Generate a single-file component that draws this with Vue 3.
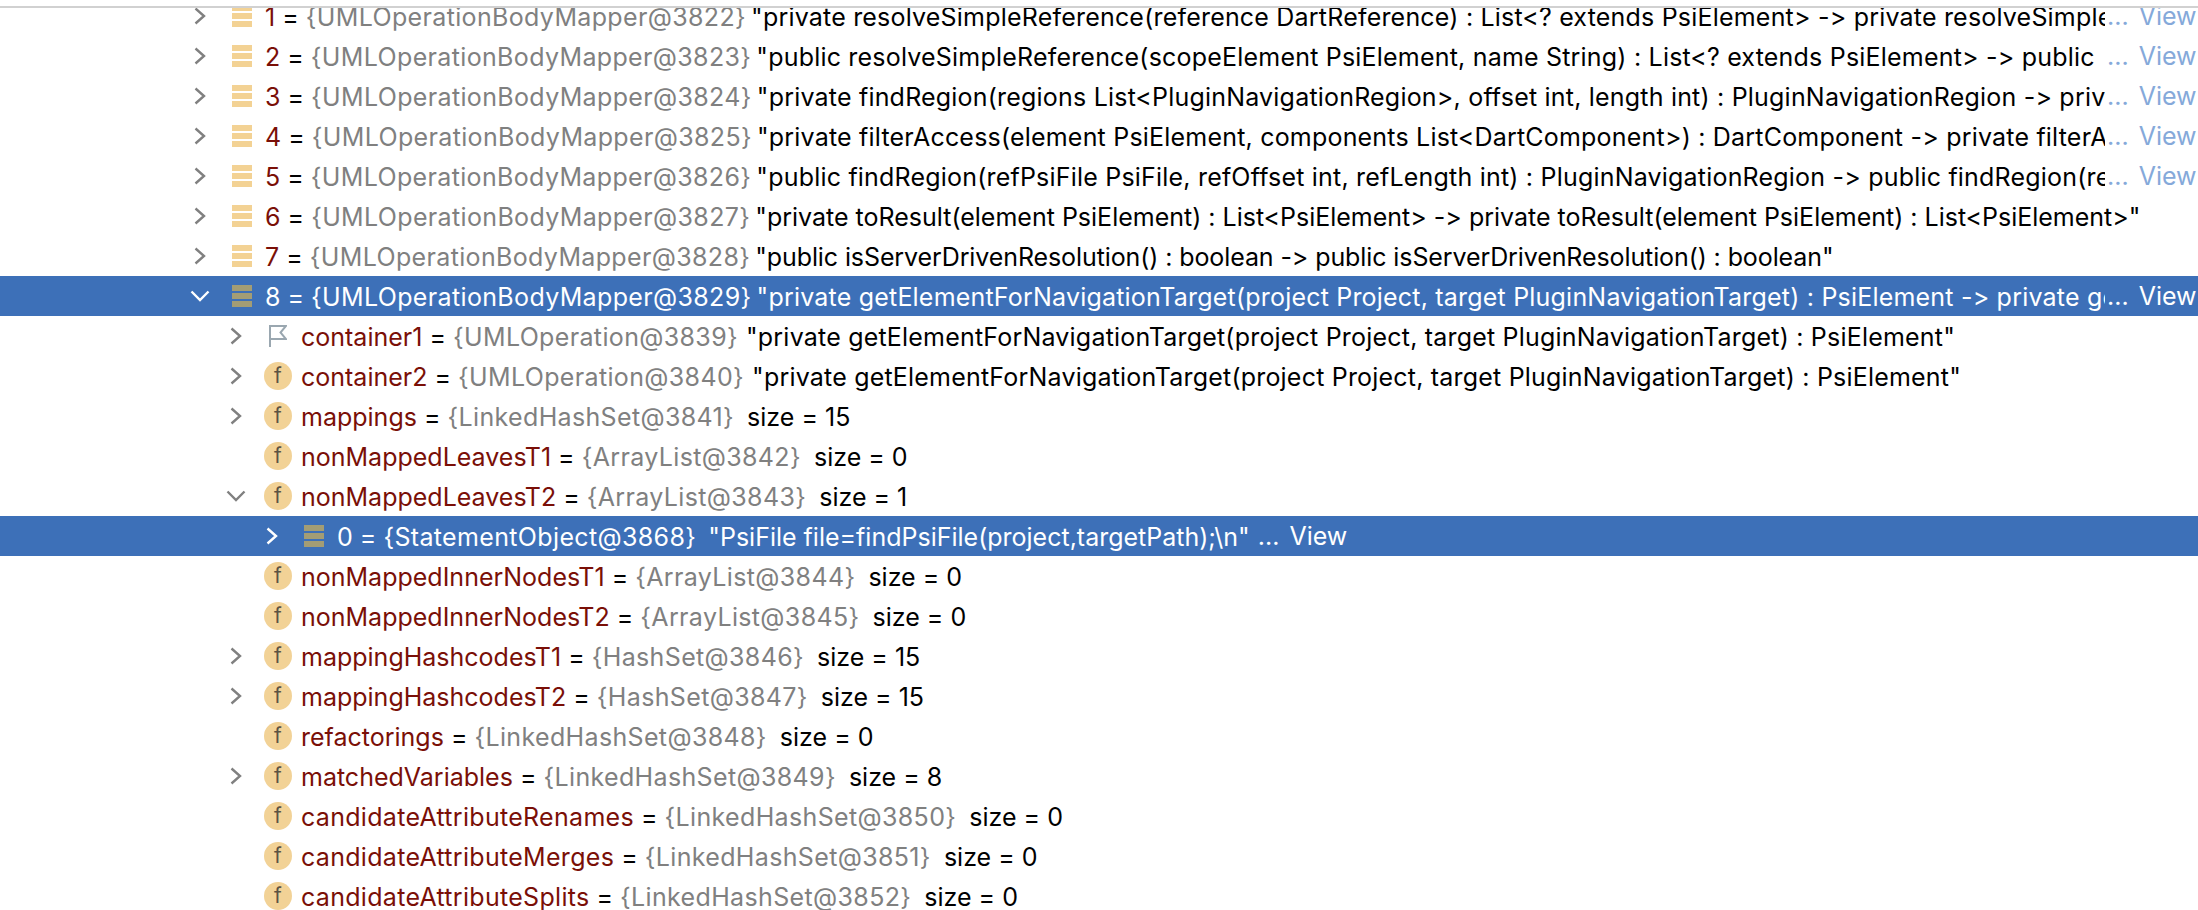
<script setup>
const rows = [
  { d: 0, c: 'r', i: 's', n: '1', t: '{UMLOperationBodyMapper@3822}', v: '"private resolveSimpleReference(reference DartReference) : List<? extends PsiElement> -> private resolveSimpleReference(reference DartReference)', view: true, fit: 'wide' },
  { d: 0, c: 'r', i: 's', n: '2', t: '{UMLOperationBodyMapper@3823}', v: '"public resolveSimpleReference(scopeElement PsiElement, name String) : List<? extends PsiElement> -> public ', view: true, fit: 'wide' },
  { d: 0, c: 'r', i: 's', n: '3', t: '{UMLOperationBodyMapper@3824}', v: '"private findRegion(regions List<PluginNavigationRegion>, offset int, length int) : PluginNavigationRegion -> private findRegion(regions List)', view: true, fit: 'wide' },
  { d: 0, c: 'r', i: 's', n: '4', t: '{UMLOperationBodyMapper@3825}', v: '"private filterAccess(element PsiElement, components List<DartComponent>) : DartComponent -> private filterAccess(element PsiElement)', view: true, fit: 'wide' },
  { d: 0, c: 'r', i: 's', n: '5', t: '{UMLOperationBodyMapper@3826}', v: '"public findRegion(refPsiFile PsiFile, refOffset int, refLength int) : PluginNavigationRegion -> public findRegion(refPsiFile PsiFile)', view: true, fit: 'wide' },
  { d: 0, c: 'r', i: 's', n: '6', t: '{UMLOperationBodyMapper@3827}', v: '"private toResult(element PsiElement) : List<PsiElement> -> private toResult(element PsiElement) : List<PsiElement>"' },
  { d: 0, c: 'r', i: 's', n: '7', t: '{UMLOperationBodyMapper@3828}', v: '"public isServerDrivenResolution() : boolean -> public isServerDrivenResolution() : boolean"', fit: 'tight' },
  { d: 0, c: 'd', i: 's', n: '8', t: '{UMLOperationBodyMapper@3829}', v: '"private getElementForNavigationTarget(project Project, target PluginNavigationTarget) : PsiElement -> private getElementForNavigationTarget(project)', view: true, sel: true, fit: 'wide' },
  { d: 1, c: 'r', i: 'p', n: 'container1', t: '{UMLOperation@3839}', v: '"private getElementForNavigationTarget(project Project, target PluginNavigationTarget) : PsiElement"', fit: 'wide' },
  { d: 1, c: 'r', i: 'f', n: 'container2', t: '{UMLOperation@3840}', v: '"private getElementForNavigationTarget(project Project, target PluginNavigationTarget) : PsiElement"', fit: 'wide' },
  { d: 1, c: 'r', i: 'f', n: 'mappings', t: '{LinkedHashSet@3841}', v: 'size = 15', sz: true },
  { d: 1, c: '', i: 'f', n: 'nonMappedLeavesT1', t: '{ArrayList@3842}', v: 'size = 0', sz: true },
  { d: 1, c: 'd', i: 'f', n: 'nonMappedLeavesT2', t: '{ArrayList@3843}', v: 'size = 1', sz: true },
  { d: 2, c: 'r', i: 's', n: '0', t: '{StatementObject@3868}', v: '"PsiFile file=findPsiFile(project,targetPath);\\n"', view: true, short: true, sel: true },
  { d: 1, c: '', i: 'f', n: 'nonMappedInnerNodesT1', t: '{ArrayList@3844}', v: 'size = 0', sz: true },
  { d: 1, c: '', i: 'f', n: 'nonMappedInnerNodesT2', t: '{ArrayList@3845}', v: 'size = 0', sz: true },
  { d: 1, c: 'r', i: 'f', n: 'mappingHashcodesT1', t: '{HashSet@3846}', v: 'size = 15', sz: true },
  { d: 1, c: 'r', i: 'f', n: 'mappingHashcodesT2', t: '{HashSet@3847}', v: 'size = 15', sz: true },
  { d: 1, c: '', i: 'f', n: 'refactorings', t: '{LinkedHashSet@3848}', v: 'size = 0', sz: true },
  { d: 1, c: 'r', i: 'f', n: 'matchedVariables', t: '{LinkedHashSet@3849}', v: 'size = 8', sz: true },
  { d: 1, c: '', i: 'f', n: 'candidateAttributeRenames', t: '{LinkedHashSet@3850}', v: 'size = 0', sz: true, long: true },
  { d: 1, c: '', i: 'f', n: 'candidateAttributeMerges', t: '{LinkedHashSet@3851}', v: 'size = 0', sz: true, long: true },
  { d: 1, c: '', i: 'f', n: 'candidateAttributeSplits', t: '{LinkedHashSet@3852}', v: 'size = 0', sz: true, long: true },
]
</script>

<template>
  <div class="page">
    <div class="topline"></div>
    <div class="viewport">
      <div class="list">
        <div
          v-for="(r, idx) in rows"
          :key="idx"
          class="row"
          :class="[{ sel: r.sel }, 'depth' + r.d]"
        >
          <span class="chev">
            <svg v-if="r.c === 'r'" width="12" height="18" viewBox="0 0 12 18"><path d="M1.5 1.5 L10 9 L1.5 16.5" /></svg>
            <svg v-else-if="r.c === 'd'" width="20" height="12" viewBox="0 0 20 12"><path d="M1.5 1.5 L10 10 L18.5 1.5" /></svg>
          </span>
          <span class="icon">
            <span v-if="r.i === 's'" class="stripes"><i></i><i></i><i></i></span>
            <span v-else-if="r.i === 'f'" class="badge">f</span>
            <svg v-else class="flag" width="18" height="22" viewBox="0 0 18 22"><path d="M1 22 V1 H17 L11.5 7.5 L17 14 H1" /></svg>
          </span>
          <span class="text" :class="{ short: r.short }"><span class="name" :class="{ long: r.long }">{{ r.n }}</span><span class="eq"> = </span><span class="type">{{ r.t }}</span><span class="val" :class="[r.fit, { sz: r.sz }]">{{ r.v }}</span></span>
          <span v-if="r.view" class="more" :class="{ inline: r.short }">... View</span>
        </div>
      </div>
    </div>
  </div>
</template>

<style scoped>
.page {
  width: 2198px;
  height: 910px;
  background: #fff;
  overflow: hidden;
  display: flex;
  flex-direction: column;
  font-family: Inter, Roboto, "Liberation Sans", sans-serif;
  font-size: 25px;
  font-variant-ligatures: none;
  font-feature-settings: "calt" 0, "liga" 0;
}
.topline {
  flex: none;
  height: 6px;
  border-bottom: 2px solid #d1d1d1;
}
.viewport {
  flex: 1;
  overflow: hidden;
}
.list {
  margin-top: -12px;
}
.row {
  height: 40px;
  display: flex;
  align-items: center;
  white-space: pre;
  color: #000;
}
.depth0 { padding-left: 190px; }
.depth1 { padding-left: 226px; }
.depth2 { padding-left: 262px; }
.sel {
  background: #3d70b8;
  color: #fff;
}
.chev {
  flex: none;
  width: 20px;
  margin-right: 18px;
  display: flex;
  justify-content: center;
  align-items: center;
}
.chev path {
  fill: none;
  stroke: #808080;
  stroke-width: 2.4;
}
.sel .chev path { stroke: #fff; }
.icon {
  flex: none;
  width: 28px;
  margin-right: 9px;
  display: flex;
  justify-content: center;
  align-items: center;
}
.stripes {
  width: 20px;
  height: 22px;
  display: flex;
  flex-direction: column;
  justify-content: space-between;
}
.stripes i {
  display: block;
  height: 6px;
  background: #f3d294;
}
.sel .stripes i { background: #a39d75; }
.badge {
  width: 28px;
  height: 28px;
  border-radius: 50%;
  background: #f2d296;
  color: #5c5343;
  font-size: 21px;
  line-height: 28px;
  text-align: center;
}
.flag path {
  fill: none;
  stroke: #9aa7b0;
  stroke-width: 2;
}
.text {
  flex: 1;
  min-width: 0;
  overflow: hidden;
  padding-top: 1px;
}
.text.short { flex: none; }
.name { color: #7a0f07; }
.name.long { letter-spacing: 0.3px; }
.type { color: #808080; letter-spacing: 0.35px; }
.val { margin-left: 5px; }
.depth1 .val { margin-left: 8px; }
.depth2 .val { margin-left: 12px; }
.depth1 .val.sz { margin-left: 13px; }
.val.wide { letter-spacing: 0.2px; }
.val.tight { letter-spacing: -0.1px; }
.sel .name, .sel .type { color: #fff; }
.more {
  flex: none;
  width: 93px;
  padding-left: 2px;
  box-sizing: border-box;
  color: #85a9da;
  word-spacing: 3px;
}
.more.inline { width: auto; padding-left: 8px; }
.sel .more { color: #fff; }
</style>
